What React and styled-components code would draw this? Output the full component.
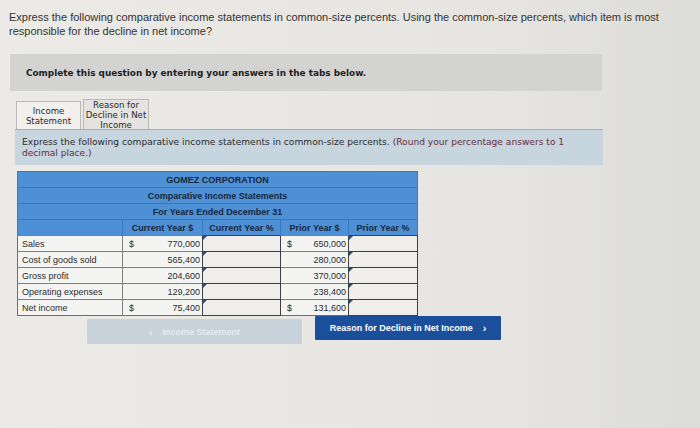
import styled, { createGlobalStyle } from "styled-components";

const GlobalStyle = createGlobalStyle`
  html, body {
    margin: 0;
    padding: 0;
    background: #e8e7e3;
  }
  body {
    font-family: "Liberation Sans", Arial, sans-serif;
    color: #2b2b2b;
  }
`;

const Page = styled.div`
  width: 700px;
  height: 428px;
  padding: 10px 0 0 9px;
  box-sizing: border-box;
  background: linear-gradient(90deg, #ebeae6 0%, #e6e5e1 70%, #dcdcd9 100%);
  overflow: hidden;
`;

const Question = styled.p`
  margin: 0;
  width: 680px;
  font-size: 11px;
  line-height: 14px;
  color: #333;
`;

const Notice = styled.div`
  margin: 16px 0 0 1px;
  width: 592px;
  height: 37px;
  background: #d3d3d1;
  display: flex;
  align-items: center;
  padding-left: 16px;
  box-sizing: border-box;
  font-family: "DejaVu Sans", Verdana, sans-serif;
  font-weight: bold;
  font-size: 8.9px;
  color: #1e1e1e;
`;

const TabBar = styled.div`
  display: flex;
  align-items: flex-end;
  gap: 2px;
  margin: 8px 0 0 7px;
  height: 30px;
`;

const Tab = styled.div`
  width: ${(p) => p.$w}px;
  height: ${(p) => (p.$active ? 28 : 30)}px;
  box-sizing: border-box;
  border: 1px solid #b9b9b6;
  border-bottom: none;
  background: ${(p) => (p.$active ? "#f1f0ed" : "#e4e3e0")};
  display: flex;
  align-items: center;
  justify-content: center;
  text-align: center;
  font-family: "DejaVu Sans", Verdana, sans-serif;
  font-size: 8.6px;
  line-height: 10px;
  color: #2a2a2a;
`;

const Instructions = styled.div`
  margin-left: 6px;
  width: 588px;
  height: 36px;
  box-sizing: border-box;
  background: #c6d5de;
  border-top: 1px solid #9fb2bf;
  padding: 7px 8px 0 7px;
  font-family: "DejaVu Sans", Verdana, sans-serif;
  font-size: 9.1px;
  line-height: 11px;
  color: #2c2c2c;
`;

const Round = styled.span`
  color: #6a2c3a;
`;

const Table = styled.table`
  margin: 6px 0 0 8px;
  border-collapse: collapse;
  width: 400px;
  table-layout: fixed;
  border: 1px solid #6a6f75;
  font-family: "Liberation Sans", Arial, sans-serif;
`;

const HeadCell = styled.td`
  height: 15px;
  padding: 0;
  background: #4e90d6;
  border-top: 1px solid #3b78ba;
  border-left: ${(p) => (p.$divided ? "1px solid #3b78ba" : "none")};
  text-align: center;
  font-weight: bold;
  font-size: 9px;
  color: #17273a;
`;

const Label = styled.td`
  height: 15px;
  padding: 0 0 0 4px;
  background: #f4f4f2;
  border-top: 1px solid #7c8084;
  font-size: 9px;
  color: #2a2a2a;
  white-space: nowrap;
`;

const Amount = styled.td`
  height: 15px;
  padding: 0 2px 0 6px;
  background: #f4f4f2;
  border-top: 1px solid #7c8084;
  border-left: 1px solid #7c8084;
  font-size: 9px;
  color: #2a2a2a;
`;

const AmountInner = styled.div`
  display: flex;
  justify-content: space-between;
`;

const InputCell = styled.td`
  height: 15px;
  padding: 0;
  background: #efeeeb;
  border: 1.5px solid #3c3f44;
  position: relative;
`;

const Marker = styled.span`
  position: absolute;
  left: 0;
  top: 0;
  width: 0;
  height: 0;
  border-top: 4px solid #2c4f86;
  border-right: 4px solid transparent;
`;

const Buttons = styled.div`
  display: flex;
  align-items: flex-start;
  gap: 13px;
  margin: 0 0 0 78px;
`;

const NavButton = styled.div`
  width: ${(p) => p.$w}px;
  height: ${(p) => p.$h}px;
  margin-top: ${(p) => p.$top || 0}px;
  background: ${(p) => (p.$primary ? "#1b4f9b" : "#c8d2db")};
  color: ${(p) => (p.$primary ? "#ffffff" : "#e6ecf1")};
  display: flex;
  align-items: center;
  justify-content: center;
  gap: 10px;
  font-family: "Liberation Sans", Arial, sans-serif;
  font-weight: bold;
  font-size: 9px;
  box-sizing: border-box;
  border-radius: 1px;
`;

const Chevron = styled.span`
  font-size: 11px;
  font-weight: bold;
`;

const rows = [
  { label: "Sales", cur: "770,000", prior: "650,000", dollar: true },
  { label: "Cost of goods sold", cur: "565,400", prior: "280,000" },
  { label: "Gross profit", cur: "204,600", prior: "370,000" },
  { label: "Operating expenses", cur: "129,200", prior: "238,400" },
  { label: "Net income", cur: "75,400", prior: "131,600", dollar: true },
];

const Money = ({ dollar, value }) => (
  <Amount>
    <AmountInner>
      <span>{dollar ? "$" : ""}</span>
      <span>{value}</span>
    </AmountInner>
  </Amount>
);

const App = () => {
  return (
    <Page>
      <GlobalStyle />
      <Question>
        Express the following comparative income statements in common-size percents. Using the common-size percents, which item is most
        <br />
        responsible for the decline in net income?
      </Question>
      <Notice>Complete this question by entering your answers in the tabs below.</Notice>
      <TabBar>
        <Tab $w={65} $active>
          Income
          <br />
          Statement
        </Tab>
        <Tab $w={66}>
          Reason for
          <br />
          Decline in Net
          <br />
          Income
        </Tab>
      </TabBar>
      <Instructions>
        Express the following comparative income statements in common-size percents.{" "}
        <Round>(Round your percentage answers to 1</Round>
        <br />
        <Round>decimal place.)</Round>
      </Instructions>
      <Table>
        <colgroup>
          <col style={{ width: 105 }} />
          <col style={{ width: 80 }} />
          <col style={{ width: 78 }} />
          <col style={{ width: 68 }} />
          <col style={{ width: 69 }} />
        </colgroup>
        <tbody>
          <tr>
            <HeadCell colSpan={5}>GOMEZ CORPORATION</HeadCell>
          </tr>
          <tr>
            <HeadCell colSpan={5}>Comparative Income Statements</HeadCell>
          </tr>
          <tr>
            <HeadCell colSpan={5}>For Years Ended December 31</HeadCell>
          </tr>
          <tr>
            <HeadCell />
            <HeadCell $divided>Current Year $</HeadCell>
            <HeadCell $divided>Current Year %</HeadCell>
            <HeadCell $divided>Prior Year $</HeadCell>
            <HeadCell $divided>Prior Year %</HeadCell>
          </tr>
          {rows.map((r) => (
            <tr key={r.label}>
              <Label>{r.label}</Label>
              <Money dollar={r.dollar} value={r.cur} />
              <InputCell>
                <Marker />
              </InputCell>
              <Money dollar={r.dollar} value={r.prior} />
              <InputCell>
                <Marker />
              </InputCell>
            </tr>
          ))}
        </tbody>
      </Table>
      <Buttons>
        <NavButton $w={215} $h={25} $top={3}>
          <Chevron>‹</Chevron>
          Income Statement
        </NavButton>
        <NavButton $w={186} $h={24} $primary>
          Reason for Decline in Net Income
          <Chevron>›</Chevron>
        </NavButton>
      </Buttons>
    </Page>
  );
};

export default App;
